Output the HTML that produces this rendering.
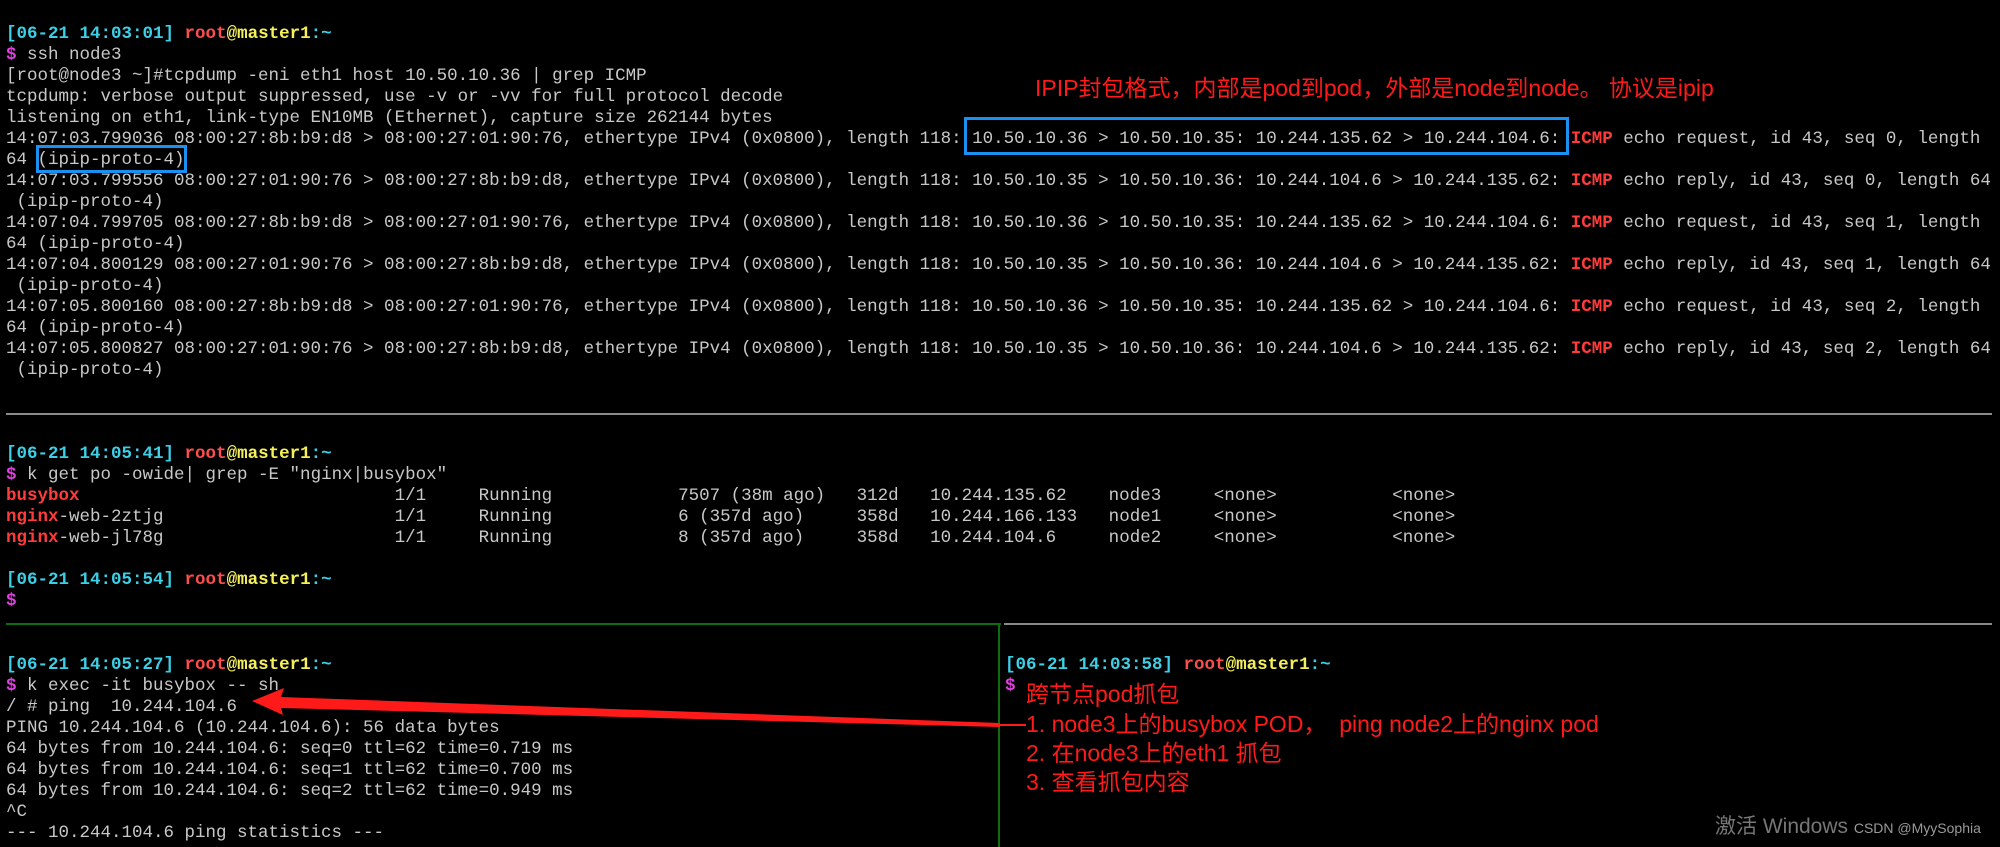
<!DOCTYPE html>
<html><head><meta charset="utf-8"><style>
html,body{margin:0;padding:0;background:#000;width:2000px;height:847px;overflow:hidden;position:relative}
.t{position:absolute;font-family:"Liberation Mono","DejaVu Sans Mono",monospace;font-size:17.5px;line-height:21px;color:#c8c8c8;white-space:pre;margin:0}
.c{color:#3ccfe6;font-weight:bold}.r{color:#ff4d4d;font-weight:bold}.y{color:#f5f05a;font-weight:bold}.m{color:#e040e0;font-weight:bold}.b{color:#ff3b3b;font-weight:bold}
.cn{position:absolute;font-family:"Liberation Sans","Noto Sans CJK SC",sans-serif;color:#ff1a1a;font-size:23px;white-space:pre;line-height:1}
.box{position:absolute;border:3px solid #1a90f0;box-sizing:border-box}
</style></head><body>
<div class="t" style="left:6px;top:24px"><span class="c">[06-21 14:03:01]</span> <span class="r">root</span><span class="y">@master1</span><span class="c">:~</span>
<span class="m">$</span> ssh node3
[root@node3 ~]#tcpdump -eni eth1 host 10.50.10.36 | grep ICMP
tcpdump: verbose output suppressed, use -v or -vv for full protocol decode
listening on eth1, link-type EN10MB (Ethernet), capture size 262144 bytes
14:07:03.799036 08:00:27:8b:b9:d8 &gt; 08:00:27:01:90:76, ethertype IPv4 (0x0800), length 118: 10.50.10.36 &gt; 10.50.10.35: 10.244.135.62 &gt; 10.244.104.6: <span class="b">ICMP</span> echo request, id 43, seq 0, length
64 (ipip-proto-4)
14:07:03.799556 08:00:27:01:90:76 &gt; 08:00:27:8b:b9:d8, ethertype IPv4 (0x0800), length 118: 10.50.10.35 &gt; 10.50.10.36: 10.244.104.6 &gt; 10.244.135.62: <span class="b">ICMP</span> echo reply, id 43, seq 0, length 64
 (ipip-proto-4)
14:07:04.799705 08:00:27:8b:b9:d8 &gt; 08:00:27:01:90:76, ethertype IPv4 (0x0800), length 118: 10.50.10.36 &gt; 10.50.10.35: 10.244.135.62 &gt; 10.244.104.6: <span class="b">ICMP</span> echo request, id 43, seq 1, length
64 (ipip-proto-4)
14:07:04.800129 08:00:27:01:90:76 &gt; 08:00:27:8b:b9:d8, ethertype IPv4 (0x0800), length 118: 10.50.10.35 &gt; 10.50.10.36: 10.244.104.6 &gt; 10.244.135.62: <span class="b">ICMP</span> echo reply, id 43, seq 1, length 64
 (ipip-proto-4)
14:07:05.800160 08:00:27:8b:b9:d8 &gt; 08:00:27:01:90:76, ethertype IPv4 (0x0800), length 118: 10.50.10.36 &gt; 10.50.10.35: 10.244.135.62 &gt; 10.244.104.6: <span class="b">ICMP</span> echo request, id 43, seq 2, length
64 (ipip-proto-4)
14:07:05.800827 08:00:27:01:90:76 &gt; 08:00:27:8b:b9:d8, ethertype IPv4 (0x0800), length 118: 10.50.10.35 &gt; 10.50.10.36: 10.244.104.6 &gt; 10.244.135.62: <span class="b">ICMP</span> echo reply, id 43, seq 2, length 64
 (ipip-proto-4)</div>

<div class="box" style="left:964px;top:117px;width:605px;height:38px"></div>
<div class="box" style="left:36px;top:145px;width:151px;height:28px"></div>
<div class="cn" style="left:1035px;top:77px">IPIP封包格式，内部是pod到pod，外部是node到node。 协议是ipip</div>

<div style="position:absolute;left:6px;top:413px;width:1986px;height:2px;background:#8a8a8a"></div>

<div class="t" style="left:6px;top:444px"><span class="c">[06-21 14:05:41]</span> <span class="r">root</span><span class="y">@master1</span><span class="c">:~</span>
<span class="m">$</span> k get po -owide| grep -E "nginx|busybox"
<span class="b">busybox</span>                              1/1     Running            7507 (38m ago)   312d   10.244.135.62    node3     &lt;none&gt;           &lt;none&gt;
<span class="b">nginx</span>-web-2ztjg                      1/1     Running            6 (357d ago)     358d   10.244.166.133   node1     &lt;none&gt;           &lt;none&gt;
<span class="b">nginx</span>-web-jl78g                      1/1     Running            8 (357d ago)     358d   10.244.104.6     node2     &lt;none&gt;           &lt;none&gt;

<span class="c">[06-21 14:05:54]</span> <span class="r">root</span><span class="y">@master1</span><span class="c">:~</span>
<span class="m">$</span></div>

<div style="position:absolute;left:6px;top:623px;width:995px;height:2px;background:#0e6e0e"></div>
<div style="position:absolute;left:998px;top:623px;width:2px;height:224px;background:#0e6e0e"></div>
<div style="position:absolute;left:1004px;top:623px;width:988px;height:2px;background:#8a8a8a"></div>

<div class="t" style="left:6px;top:655px"><span class="c">[06-21 14:05:27]</span> <span class="r">root</span><span class="y">@master1</span><span class="c">:~</span>
<span class="m">$</span> k exec -it busybox -- sh
/ # ping  10.244.104.6
PING 10.244.104.6 (10.244.104.6): 56 data bytes
64 bytes from 10.244.104.6: seq=0 ttl=62 time=0.719 ms
64 bytes from 10.244.104.6: seq=1 ttl=62 time=0.700 ms
64 bytes from 10.244.104.6: seq=2 ttl=62 time=0.949 ms
^C
--- 10.244.104.6 ping statistics ---</div>

<div class="t" style="left:1005px;top:655px"><span class="c">[06-21 14:03:58]</span> <span class="r">root</span><span class="y">@master1</span><span class="c">:~</span>
<span class="m">$</span></div>

<div class="cn" style="left:1026px;top:683px">跨节点pod抓包</div>
<div class="cn" style="left:1026px;top:713px">1. node3上的busybox POD，  ping node2上的nginx pod</div>
<div class="cn" style="left:1026px;top:742px">2. 在node3上的eth1 抓包</div>
<div class="cn" style="left:1026px;top:771px">3. 查看抓包内容</div>

<svg style="position:absolute;left:0;top:0" width="2000" height="847">
<polygon points="252,701 284,688 281,697 1000,723 1000,727 281,708 283,715" fill="#ff1a1a"/>
<line x1="998" y1="725" x2="1026" y2="725" stroke="#ff1a1a" stroke-width="2"/>
</svg>

<div style="position:absolute;left:1715px;top:814px;font-family:'Liberation Sans','Noto Sans CJK SC',sans-serif;font-size:21px;color:#777;white-space:pre;line-height:26px">激活 Windows <span style="font-size:14px;color:#9a9a9a">CSDN @MyySophia</span></div>
</body></html>
